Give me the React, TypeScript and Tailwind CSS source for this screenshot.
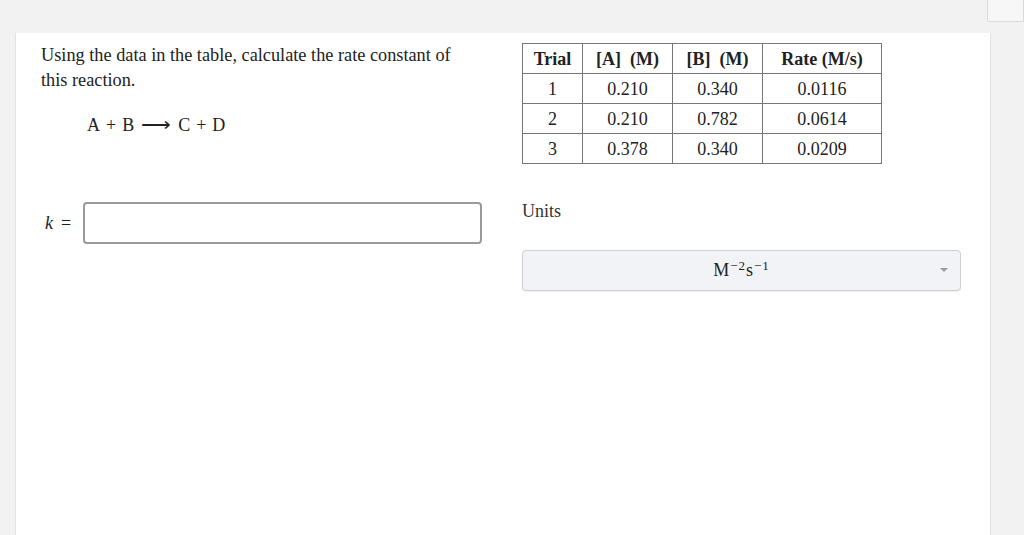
import React from "react";

const serif = { fontFamily: '"Liberation Serif", "Times New Roman", serif' };

const rows = [
  ["1", "0.210", "0.340", "0.0116"],
  ["2", "0.210", "0.782", "0.0614"],
  ["3", "0.378", "0.340", "0.0209"],
];

export default function App() {
  return (
    <div className="relative h-[535px] w-[1024px] overflow-hidden bg-[#f2f2f2]" style={serif}>
      {/* corner tab */}
      <div className="absolute right-0 top-[-1px] h-[23px] w-[37px] rounded-bl-[3px] border border-[#d9d9d9] bg-[#f7f7f7]" />

      <div className="ml-[15px] mt-[33px] flex h-[502px] w-[976px] border-x border-[#e2e2e2] bg-white pl-[25px] pt-[10px] text-[18px] leading-[25px] text-[#222]">
        {/* left column */}
        <div className="w-[441px] shrink-0">
          <p className="text-[18.3px]">
            Using the data in the table, calculate the rate constant of
            <br />
            this reaction.
          </p>
          <div className="ml-[46px] mt-[20px] flex items-center gap-[6px]">
            <span>A</span>
            <span>+</span>
            <span>B</span>
            <span className="mx-[3px] inline-block scale-x-[1.15]">⟶</span>
            <span>C</span>
            <span>+</span>
            <span>D</span>
          </div>
          <div className="mt-[64px] flex items-center">
            <span className="flex w-[42px] gap-[8px] pl-[4px]">
              <i>k</i>
              <span>=</span>
            </span>
            <div className="h-[42px] w-[399px] rounded-[4px] border-2 border-[#9a9a9a] bg-white" />
          </div>
        </div>

        {/* right column */}
        <div className="ml-[40px] w-[439px] shrink-0">
          <table className="border-collapse border border-[#333] text-center text-[18px] leading-[20px]">
            <thead>
              <tr className="h-[30px]">
                <th className="w-[60px] border border-[#777] font-bold">Trial</th>
                <th className="w-[90px] border border-[#777] font-bold">[A]&nbsp;&nbsp;(M)</th>
                <th className="w-[90px] border border-[#777] font-bold">[B]&nbsp;&nbsp;(M)</th>
                <th className="w-[119px] border border-[#777] font-bold">Rate (M/s)</th>
              </tr>
            </thead>
            <tbody>
              {rows.map((r) => (
                <tr key={r[0]} className="h-[30px]">
                  {r.map((c, i) => (
                    <td key={i} className="border border-[#777] font-normal">
                      {c}
                    </td>
                  ))}
                </tr>
              ))}
            </tbody>
          </table>

          <div className="mt-[35px] text-[#333]">Units</div>

          <div className="relative mt-[26px] flex h-[41px] items-center justify-center rounded-[4px] border border-[#cfcfcf] bg-[#f2f3f6] shadow-[0_1px_1px_rgba(0,0,0,0.06)]">
            <span className="text-[18px]">
              M<sup className="ml-[1px] text-[13px] tracking-[1px]">−2</sup>s
              <sup className="ml-[1px] text-[13px] tracking-[1px]">−1</sup>
            </span>
            <span className="absolute right-[12px] top-[17px] h-0 w-0 border-x-[4px] border-t-[4px] border-x-transparent border-t-[#9a9a9a]" />
          </div>
        </div>
      </div>
    </div>
  );
}
